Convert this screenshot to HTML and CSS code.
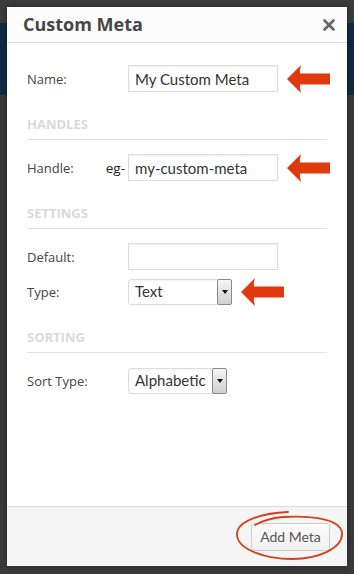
FILE: index.html
```html
<!DOCTYPE html>
<html lang="en">

<head>
  <meta charset="UTF-8">
  <meta name="viewport" content="width=device-width, initial-scale=1.0">
  <title>Custom Meta</title>
  <link rel="stylesheet" href="styles.css">
</head>

<body>
  <div class="modal">
    <div class="modal-header">
      <h1>Custom Meta</h1>
      <span class="close">
        <svg width="12" height="12" viewBox="0 0 12 12">
          <path d="M1.5 1.5 L10.5 10.5 M10.5 1.5 L1.5 10.5" stroke="#666" stroke-width="2.6" stroke-linecap="round" />
        </svg>
      </span>
    </div>

    <div class="modal-body">
      <div class="row">
        <label class="label" for="name">Name:</label>
        <input type="text" id="name" class="text-input" value="My Custom Meta">
        <svg class="arrow" width="44" height="28" viewBox="0 0 44 28">
          <path d="M0 14 L14 0 Q12.5 5 13 8.5 L43 8.5 L43 19.5 L13 19.5 Q12.5 23 14 28 Z" fill="#e0390d" />
        </svg>
      </div>

      <h2 class="section-title">Handles</h2>
      <div class="row">
        <label class="label" for="handle">Handle: <span class="prefix">eg-</span></label>
        <input type="text" id="handle" class="text-input" value="my-custom-meta">
        <svg class="arrow" width="44" height="28" viewBox="0 0 44 28">
          <path d="M0 14 L14 0 Q12.5 5 13 8.5 L43 8.5 L43 19.5 L13 19.5 Q12.5 23 14 28 Z" fill="#e0390d" />
        </svg>
      </div>

      <h2 class="section-title">Settings</h2>
      <div class="row">
        <label class="label" for="default">Default:</label>
        <input type="text" id="default" class="text-input" value="">
      </div>
      <div class="row row-gap">
        <span class="label">Type:</span>
        <div class="select select-type">
          <span class="select-value">Text</span>
          <span class="select-btn"></span>
        </div>
        <svg class="arrow" width="44" height="28" viewBox="0 0 44 28">
          <path d="M0 14 L14 0 Q12.5 5 13 8.5 L43 8.5 L43 19.5 L13 19.5 Q12.5 23 14 28 Z" fill="#e0390d" />
        </svg>
      </div>

      <h2 class="section-title">Sorting</h2>
      <div class="row">
        <span class="label">Sort Type:</span>
        <div class="select select-sort">
          <span class="select-value">Alphabetic</span>
          <span class="select-btn"></span>
        </div>
      </div>
    </div>

    <div class="modal-footer">
      <button type="button" class="btn">Add Meta</button>
      <svg class="circled" width="110" height="52" viewBox="0 0 110 52">
        <path d="M52 1 C26 2 0 10 1 24 C2 39 30 48 56 48 C83 48 107 37 106 22 C105 9 78 4 47 6 C36 7 26 10 19 14"
          fill="none" stroke="#d4411b" stroke-width="1.8" stroke-linecap="round" />
      </svg>
    </div>
  </div>
</body>

</html>
```

FILE: styles.css
```css
body {
  margin: 0;
  padding: 0;
  font-family: "Open Sans", "Liberation Sans", Arial, sans-serif;
  background: linear-gradient(to bottom, #3c3c3c 0, #3c3c3c 23px, #0f2b44 23px, #0f2b44 95px, #3a3a3a 95px);
  height: 574px;
  overflow: hidden;
}

.modal {
  margin: 7px;
  width: 340px;
  height: 559px;
  background: #fff;
  display: flex;
  flex-direction: column;
  box-shadow: 0 0 6px rgba(0, 0, 0, 0.4);
}

.modal-header {
  height: 35px;
  flex: 0 0 35px;
  border-bottom: 1px solid #dddddd;
  background: #fcfcfc;
  display: flex;
  align-items: center;
  justify-content: space-between;
  padding: 0 12px 0 16px;
}

.modal-header h1 {
  margin: 0;
  font-size: 18px;
  line-height: 35px;
  font-weight: 700;
  color: #464646;
}

.close {
  display: flex;
  width: 12px;
  height: 12px;
  margin-top: 1px;
}

.modal-body {
  flex: 1;
  padding: 22px 20px 0;
}

.row {
  display: flex;
  align-items: center;
  height: 27px;
}

.row-gap {
  margin-top: 9px;
  height: 26px;
}

.label {
  flex: 0 0 101px;
  display: flex;
  justify-content: space-between;
  padding-right: 3px;
  box-sizing: border-box;
  font-size: 13px;
  color: #444;
}

.prefix {
  color: #222;
  font-size: 13.5px;
}

.text-input {
  width: 150px;
  height: 27px;
  box-sizing: border-box;
  margin: 0;
  padding: 0 6px;
  border: 1px solid #dddddd;
  box-shadow: inset 0 1px 2px rgba(0, 0, 0, 0.07);
  font-family: Lato, "Open Sans", sans-serif;
  font-size: 15px;
  color: #333;
  outline: none;
}

.arrow {
  margin-left: 9px;
  flex: 0 0 auto;
}

.section-title {
  margin: 22px 0 14px;
  padding-bottom: 5px;
  border-bottom: 1px solid #e2e2e2;
  font-size: 13px;
  line-height: 20px;
  font-weight: 700;
  text-transform: uppercase;
  color: #dadada;
}

.select {
  height: 26px;
  box-sizing: border-box;
  display: flex;
  align-items: stretch;
  border: 1px solid #dddddd;
  border-radius: 3px;
  background: #fff;
  box-shadow: inset 0 1px 2px rgba(0, 0, 0, 0.05);
}

.select-type {
  width: 104px;
}

.select-sort {
  width: 99px;
}

.select-value {
  flex: 1;
  padding-left: 6px;
  font-family: Lato, "Open Sans", sans-serif;
  font-size: 15px;
  line-height: 23px;
  color: #333;
  white-space: nowrap;
}

.select-btn {
  flex: 0 0 15px;
  margin: -1px -1px -1px 0;
  box-sizing: border-box;
  border: 1px solid #8a8a8a;
  border-radius: 2px;
  background: linear-gradient(to bottom, #f6f6f6, #cfcfcf);
  display: flex;
  align-items: center;
  justify-content: center;
}

.select-btn::after {
  content: "";
  width: 0;
  height: 0;
  border-left: 3.5px solid transparent;
  border-right: 3.5px solid transparent;
  border-top: 4px solid #111;
}

.modal-footer {
  flex: 0 0 59px;
  border-top: 1px solid #dddddd;
  background: #f5f5f5;
  display: flex;
  align-items: center;
  justify-content: flex-end;
  padding-right: 17px;
  position: relative;
}

.btn {
  width: 79px;
  height: 28px;
  padding: 0;
  border: 1px solid #cccccc;
  border-radius: 3px;
  background: linear-gradient(to bottom, #fbfbfb, #f0f0f0);
  font-family: Lato, "Open Sans", sans-serif;
  font-size: 14px;
  color: #555;
  cursor: pointer;
}

.circled {
  position: absolute;
  left: 229px;
  top: 4px;
  pointer-events: none;
}
```
